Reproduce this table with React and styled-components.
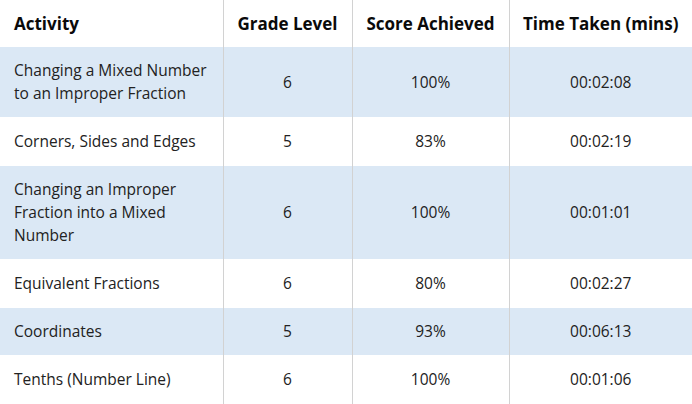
import styled, { createGlobalStyle } from "styled-components";

const GlobalStyle = createGlobalStyle`
    body {
        margin: 0;
        background: #ffffff;
        font-family: "Open Sans", "Noto Sans", sans-serif;
    }
`;

const linhas = [
    { atividade: "Changing a Mixed Number to an Improper Fraction", nivel: 6, nota: "100%", tempo: "00:02:08" },
    { atividade: "Corners, Sides and Edges", nivel: 5, nota: "83%", tempo: "00:02:19" },
    { atividade: "Changing an Improper Fraction into a Mixed Number", nivel: 6, nota: "100%", tempo: "00:01:01" },
    { atividade: "Equivalent Fractions", nivel: 6, nota: "80%", tempo: "00:02:27" },
    { atividade: "Coordinates", nivel: 5, nota: "93%", tempo: "00:06:13" },
    { atividade: "Tenths (Number Line)", nivel: 6, nota: "100%", tempo: "00:01:06" },
];

export default function App() {
    return (
        <>
            <GlobalStyle />
            <Tabela>
                <colgroup>
                    <col style={{ width: 223 }} />
                    <col style={{ width: 129 }} />
                    <col style={{ width: 157 }} />
                    <col />
                </colgroup>
                <thead>
                    <tr>
                        <Cabecalho $esquerda>Activity</Cabecalho>
                        <Cabecalho>Grade Level</Cabecalho>
                        <Cabecalho>Score Achieved</Cabecalho>
                        <Cabecalho>Time Taken (mins)</Cabecalho>
                    </tr>
                </thead>
                <tbody>
                    {linhas.map((l, i) => (
                        <Linha key={i} $azul={i % 2 === 0}>
                            <Celula $esquerda>{l.atividade}</Celula>
                            <Celula>{l.nivel}</Celula>
                            <Celula>{l.nota}</Celula>
                            <Celula>{l.tempo}</Celula>
                        </Linha>
                    ))}
                </tbody>
            </Tabela>
        </>
    );
}

const Tabela = styled.table`
    width: 692px;
    border-collapse: collapse;
    table-layout: fixed;
`;

const Cabecalho = styled.th`
    height: 47px;
    padding: 0 ${props => props.$esquerda ? "14px" : "4px"};
    box-sizing: border-box;
    font-size: 17px;
    font-weight: 700;
    color: #0a0a0a;
    text-align: ${props => props.$esquerda ? "left" : "center"};
    border-left: ${props => props.$esquerda ? "none" : "1px solid #d2d2d2"};
    white-space: nowrap;
`;

const Linha = styled.tr`
    background-color: ${props => props.$azul ? "#dbe8f5" : "#ffffff"};

    td {
        padding-top: ${props => props.$azul ? "12px" : "13px"};
        padding-bottom: ${props => props.$azul ? "12px" : "13px"};
    }
`;

const Celula = styled.td`
    padding-left: 14px;
    padding-right: 8px;
    font-size: 15.5px;
    line-height: 23px;
    color: #222222;
    text-align: ${props => props.$esquerda ? "left" : "center"};
    border-left: ${props => props.$esquerda ? "none" : "1px solid #d2d2d2"};
    vertical-align: middle;

    &:not(:first-child) {
        padding-left: 4px;
        padding-right: 4px;
    }
`;
